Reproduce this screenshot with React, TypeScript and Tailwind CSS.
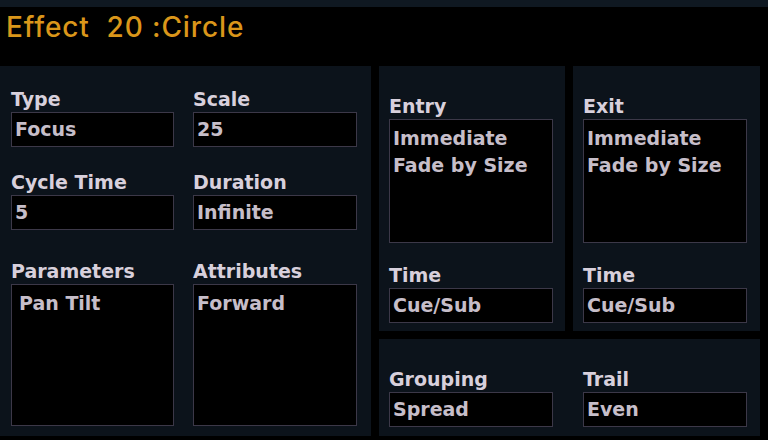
import React from "react";

const font = { fontFamily: '"DejaVu Sans", Verdana, sans-serif' };

// single line value box
const Field = ({ label, value, width = "w-[164px]" }: any) => (
    <div className={`flex flex-col ${width}`}>
        <div className="text-[19px] font-bold leading-[20px] text-[#d8d0dc] mb-[3px] whitespace-nowrap">{label}</div>
        <div className="h-[35px] border border-[#3c3848] bg-black flex items-center pl-[3px] text-[19px] font-bold leading-[27px] text-[#c6bec9] whitespace-nowrap">
            {value}
        </div>
    </div>
);

// multi line list box
const ListField = ({ label, items, height, width = "w-[164px]", indent = "pl-[3px]" }: any) => (
    <div className={`flex flex-col ${width}`}>
        <div className="text-[19px] font-bold leading-[20px] text-[#d8d0dc] mb-[3px] whitespace-nowrap">{label}</div>
        <div className={`${height} border border-[#3c3848] bg-black pt-[5px] ${indent} text-[19px] font-bold leading-[27px] text-[#c6bec9]`}>
            {items.map((item: string, index: number) => (
                <div key={index} className="whitespace-nowrap">{item}</div>
            ))}
        </div>
    </div>
);

export default function App() {
    return (
        <div className="w-[768px] h-[440px] bg-black flex flex-col overflow-hidden" style={font}>
            {/* top strip */}
            <div className="h-[7px] bg-[#0f1821]" />

            {/* title */}
            <div className="h-[59px] pl-[6px] pt-[4px]">
                <div
                    className="text-[28px] leading-[32px] font-medium text-[#da961a] tracking-[0.9px] whitespace-pre"
                    style={{ fontFamily: 'Inter, "Liberation Sans", sans-serif' }}
                >
                    Effect  20 :Circle
                </div>
            </div>

            <div className="flex gap-[8px] h-[370px]">
                {/* Left panel */}
                <div className="w-[371px] bg-[#0c131b] pl-[11px] pt-[23px] pb-[10px] flex flex-col">
                    <div className="flex gap-[19px]">
                        <Field label="Type" value="Focus" width="w-[163px]" />
                        <Field label="Scale" value="25" />
                    </div>
                    <div className="flex gap-[19px] mt-[25px]">
                        <Field label="Cycle Time" value="5" width="w-[163px]" />
                        <Field label="Duration" value="Infinite" />
                    </div>
                    <div className="flex gap-[19px] mt-[31px]">
                        <ListField label="Parameters" items={["Pan Tilt"]} height="h-[142px]" width="w-[163px]" indent="pl-[7px]" />
                        <ListField label="Attributes" items={["Forward"]} height="h-[142px]" />
                    </div>
                </div>

                {/* Right column */}
                <div className="w-[381px] flex flex-col gap-[8px]">
                    <div className="flex gap-[8px] h-[265px]">
                        <div className="w-[186px] bg-[#0c131b] pl-[10px] pt-[30px] flex flex-col">
                            <ListField label="Entry" items={["Immediate", "Fade by Size"]} height="h-[124px]" />
                            <div className="mt-[22px]">
                                <Field label="Time" value="Cue/Sub" />
                            </div>
                        </div>
                        <div className="w-[187px] bg-[#0c131b] pl-[10px] pt-[30px] flex flex-col">
                            <ListField label="Exit" items={["Immediate", "Fade by Size"]} height="h-[124px]" />
                            <div className="mt-[22px]">
                                <Field label="Time" value="Cue/Sub" />
                            </div>
                        </div>
                    </div>
                    <div className="h-[97px] bg-[#0c131b] pl-[10px] pt-[30px] flex gap-[30px]">
                        <Field label="Grouping" value="Spread" />
                        <Field label="Trail" value="Even" />
                    </div>
                </div>
            </div>
        </div>
    );
}
